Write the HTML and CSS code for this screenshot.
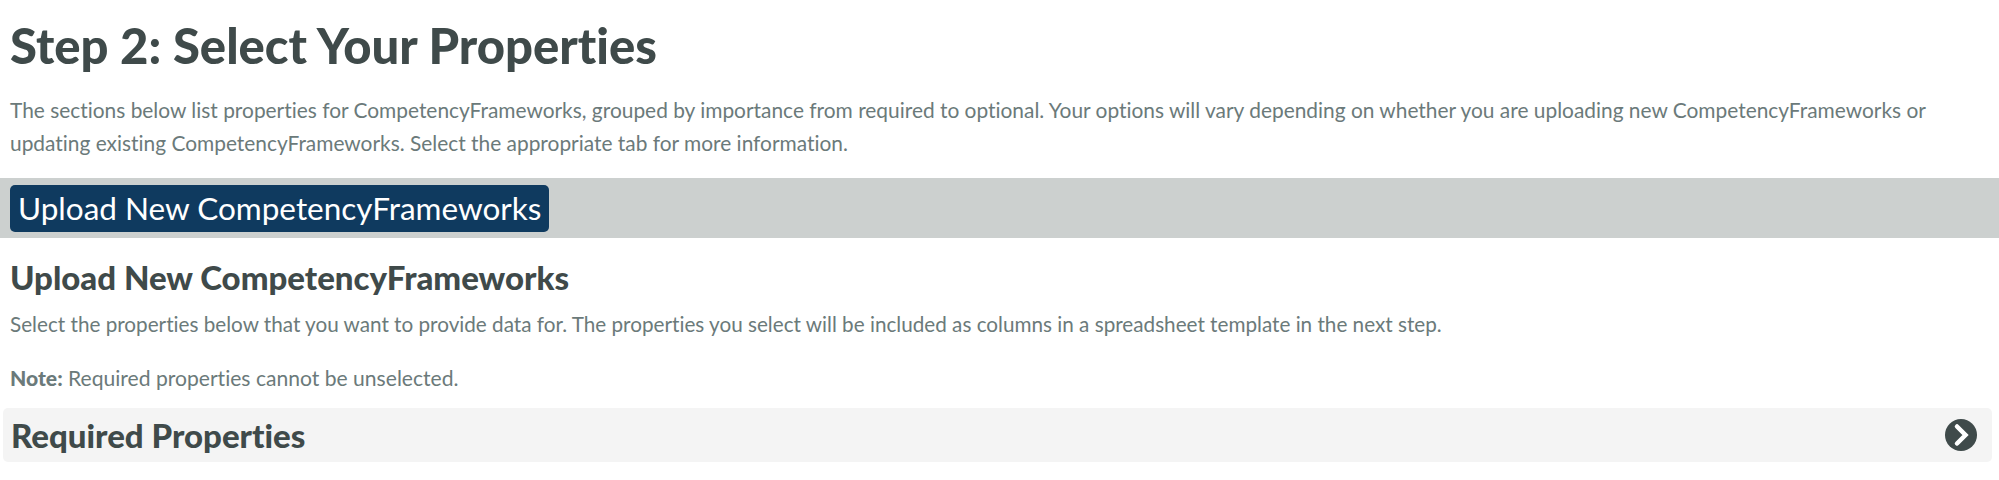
FILE: index.html
```html
<!DOCTYPE html>
<html lang="en">
<head>
  <meta charset="UTF-8">
  <meta name="viewport" content="width=device-width, initial-scale=1">
  <title>Step 2: Select Your Properties</title>
  <link rel="stylesheet" href="styles.css">
</head>
<body>
  <h1>Step 2: Select Your Properties</h1>
  <p class="intro">The sections below list properties for CompetencyFrameworks, grouped by importance from required to optional. Your options will vary depending on whether you are uploading new CompetencyFrameworks or updating existing CompetencyFrameworks. Select the appropriate tab for more information.</p>

  <div class="tabs">
    <button class="tab">Upload New CompetencyFrameworks</button>
  </div>

  <h2>Upload New CompetencyFrameworks</h2>
  <p class="lead">Select the properties below that you want to provide data for. The properties you select will be included as columns in a spreadsheet template in the next step.</p>
  <p class="note"><strong>Note:</strong> Required properties cannot be unselected.</p>

  <div class="section-bar">
    <span class="section-title">Required Properties</span>
    <svg class="section-icon" viewBox="0 0 32 32" width="32" height="32" aria-hidden="true">
      <circle cx="16" cy="16" r="16" fill="#3f4a4a"/>
      <path d="M12 7.5 20.5 16 12 24.5" fill="none" stroke="#fff" stroke-width="4.5" stroke-linecap="round"/>
    </svg>
  </div>
</body>
</html>
```

FILE: styles.css
```css
body {
  margin: 0;
  background: #fff;
  font-family: Lato, "Open Sans", sans-serif;
  font-variant-ligatures: none;
  color: #6b7a7a;
}

h1 {
  margin: 0;
  padding: 17px 10px 0;
  font-size: 49px;
  line-height: 56px;
  font-weight: 900;
  color: #3f4a4a;
}

p {
  margin: 0;
  padding: 0 10px;
  font-size: 20.7px;
  line-height: 33px;
}

.intro {
  margin-top: 20px;
  font-size: 20.9px;
}

.tabs {
  display: flex;
  align-items: center;
  height: 60px;
  margin-top: 19px;
  padding: 0 10px;
  background: #ccd0cf;
}

.tab {
  height: 47px;
  padding: 0 8px;
  border: none;
  border-radius: 5px;
  background: #0f3a5f;
  color: #fff;
  font-family: inherit;
  font-variant-ligatures: none;
  font-size: 31.5px;
}

h2 {
  margin: 21px 0 0;
  padding: 0 10px;
  font-size: 33px;
  line-height: 36px;
  font-weight: 900;
  color: #3f4a4a;
}

.lead {
  margin-top: 13px;
}

.note {
  margin-top: 20px;
  font-size: 21.1px;
}

.note strong {
  font-weight: 900;
}

.section-bar {
  display: flex;
  align-items: center;
  justify-content: space-between;
  height: 54px;
  margin: 14px 7px 0 3px;
  padding: 0 15px 0 8px;
  border-radius: 5px;
  background: #f4f4f4;
}

.section-title {
  font-size: 33px;
  font-weight: 900;
  color: #3f4a4a;
}

.section-icon {
  display: block;
}
```
